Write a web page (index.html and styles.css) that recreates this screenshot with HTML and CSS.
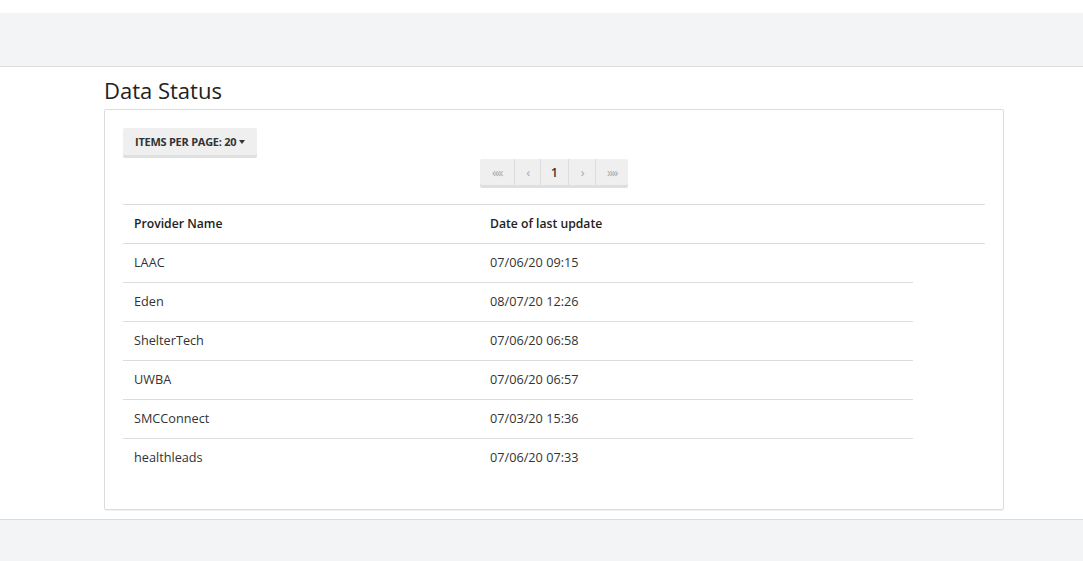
FILE: index.html
```html
<!DOCTYPE html>
<html>
<head>
<meta charset="utf-8">
<link rel="stylesheet" href="styles.css">
</head>
<body>
<div class="topgap"></div>
<header class="navband"></header>
<main class="content">
  <h1 class="title">Data Status</h1>
  <section class="panel">
    <div class="toolbar">
      <button class="perpage">ITEMS PER PAGE: 20<span class="caret"></span></button>
    </div>
    <div class="pager-wrap">
      <ul class="pager">
        <li class="pg muted w34">««</li>
        <li class="pg muted w26">‹</li>
        <li class="pg current w28">1</li>
        <li class="pg muted w27">›</li>
        <li class="pg muted w33">»»</li>
      </ul>
    </div>
    <div class="table">
      <div class="row head">
        <div class="c1">Provider Name</div>
        <div class="c2">Date of last update</div>
      </div>
      <div class="body">
        <div class="row"><div class="c1">LAAC</div><div class="c2">07/06/20 09:15</div></div>
        <div class="row"><div class="c1">Eden</div><div class="c2">08/07/20 12:26</div></div>
        <div class="row"><div class="c1">ShelterTech</div><div class="c2">07/06/20 06:58</div></div>
        <div class="row"><div class="c1">UWBA</div><div class="c2">07/06/20 06:57</div></div>
        <div class="row"><div class="c1">SMCConnect</div><div class="c2">07/03/20 15:36</div></div>
        <div class="row"><div class="c1">healthleads</div><div class="c2">07/06/20 07:33</div></div>
      </div>
    </div>
  </section>
</main>
<footer class="footband"></footer>
</body>
</html>
```

FILE: styles.css
```css
html, body {
  margin: 0;
  padding: 0;
  background: #fff;
  font-family: "Open Sans", "Liberation Sans", sans-serif;
  color: #333;
}
.topgap { height: 13px; }
.navband {
  height: 53px;
  background: #f3f4f6;
  border-bottom: 1px solid #dcdcdc;
}
.content {
  margin-left: 104px;
  width: 900px;
}
.title {
  margin: 0;
  height: 42px;
  font-size: 22px;
  font-weight: 400;
  line-height: 46px;
  color: #222;
}
.panel {
  border: 1px solid #dcdcdc;
  border-radius: 2px;
  box-shadow: 0 1px 1px rgba(0,0,0,0.06);
  padding: 18px 18px 30px 18px;
  height: 351px;
}
.toolbar { display: flex; height: 31px; }
.perpage {
  font-family: "Open Sans", "Liberation Sans", sans-serif;
  font-size: 11px;
  font-weight: 700;
  letter-spacing: -0.25px;
  color: #333;
  background: #efefef;
  border: none;
  border-radius: 2px;
  box-shadow: 0 3px 0 #dedfe1;
  height: 27px;
  width: 134px;
  padding: 0 0 0 12px;
  display: flex;
  align-items: center;
  text-align: left;
}
.caret {
  display: inline-block;
  margin-left: 3px;
  border-left: 3.5px solid transparent;
  border-right: 3.5px solid transparent;
  border-top: 4px solid #333;
}
.pager-wrap { display: flex; justify-content: center; height: 45px; }
.pager {
  list-style: none;
  margin: 0;
  padding: 0;
  display: flex;
  height: 26px;
  background: #efefef;
  border-radius: 2px;
  box-shadow: 0 3px 0 #dedfe1;
}
.pg {
  display: flex;
  align-items: center;
  justify-content: center;
  font-size: 13px;
  border-left: 1px solid #dcdcdc;
  box-sizing: border-box;
}
.pg:first-child { border-left: none; }
.muted { color: #a8a8a8; letter-spacing: -1.5px; padding-bottom: 1px; }
.current { color: #333; font-weight: 600; font-size: 12px; }
.w34 { width: 34px; }
.w26 { width: 26px; }
.w28 { width: 28px; }
.w27 { width: 27px; }
.w33 { width: 33px; }
.table { font-size: 12.7px; }
.row {
  display: flex;
  height: 39px;
  align-items: center;
  border-top: 1px solid #dcdcdc;
  box-sizing: border-box;
  padding-bottom: 2px;
}
.row.head {
  font-weight: 600;
  font-size: 12.2px;
  color: #222;
  border-bottom: 1px solid #dcdcdc;
  height: 40px;
}
.body { width: 790px; }
.body .row:first-child { border-top: none; height: 38px; }
.c1 { width: 356px; padding-left: 11px; box-sizing: border-box; }
.c2 { padding-left: 11px; }
.footband {
  margin-top: 9px;
  height: 43px;
  background: #f3f4f6;
  border-top: 1px solid #dcdcdc;
}
```
